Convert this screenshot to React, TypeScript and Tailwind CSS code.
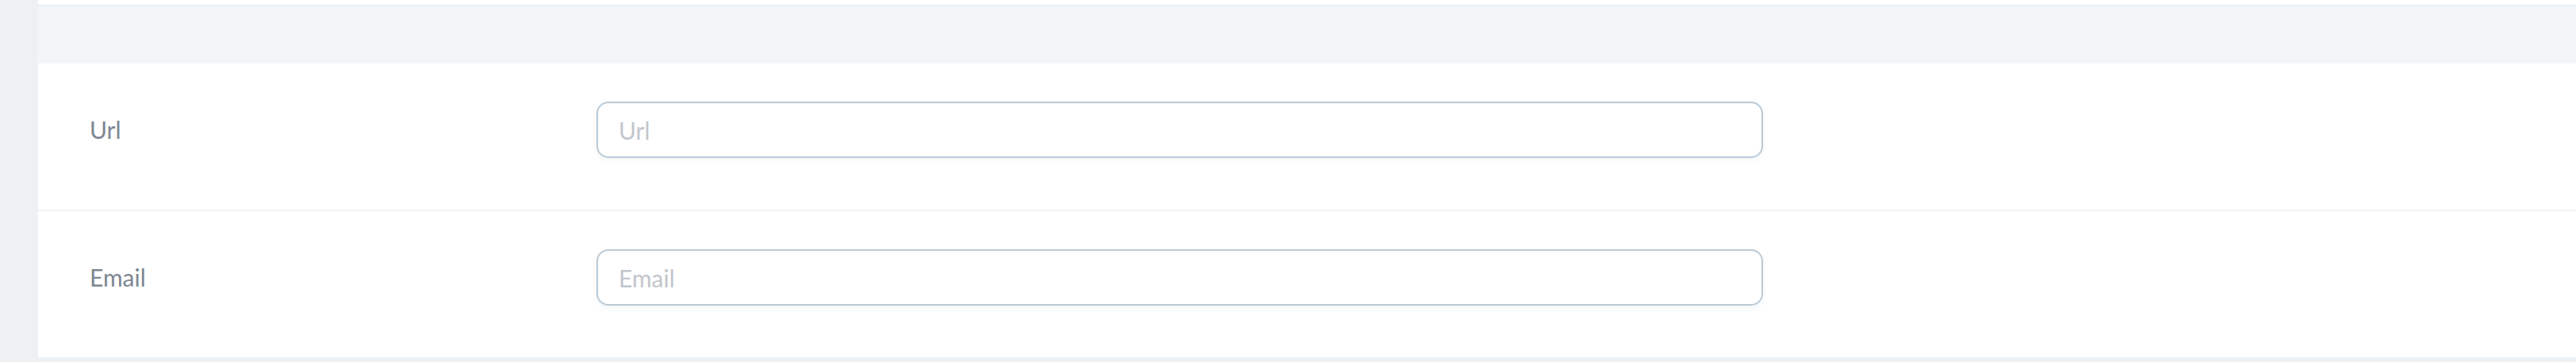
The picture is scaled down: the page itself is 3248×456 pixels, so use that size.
import { useState } from 'react'

const FieldRow = ({ label, placeholder }: { label: string; placeholder: string }) => {
	const [value, setValue] = useState('')

	return (
		<div className="flex h-[184px] items-start pt-[48px]">
			<label className="flex h-[71px] w-[704px] shrink-0 items-center pl-[65px] text-[30px] text-[#7d8792]">
				{label}
			</label>
			<input
				value={value}
				onChange={e => setValue(e.target.value)}
				placeholder={placeholder}
				className="h-[71px] w-[1471px] rounded-[15px] border-2 border-[#bacad7] bg-white px-[26px] text-[30px] text-[#4a525b] shadow-[0_3px_6px_rgba(40,60,80,0.06)] outline-none placeholder:text-[#c2c6cc]"
			/>
		</div>
	)
}

export default function App() {
	return (
		<div className="flex h-[456px] w-full bg-white font-['Lato','Noto_Sans',sans-serif]">
			<div className="w-[48px] shrink-0 bg-[#edf1f4]" />
			<div className="flex flex-1 flex-col">
				<div className="h-[6px] bg-white" />
				<div className="h-[2px] bg-[#e9eef2]" />
				<div className="h-[72px] bg-[#f2f6f9]" />
				<FieldRow label="Url" placeholder="Url" />
				<div className="h-[2px] bg-[#eef2f5]" />
				<FieldRow label="Email" placeholder="Email" />
				<div className="h-[6px] bg-[#eef2f5]" />
			</div>
		</div>
	)
}
